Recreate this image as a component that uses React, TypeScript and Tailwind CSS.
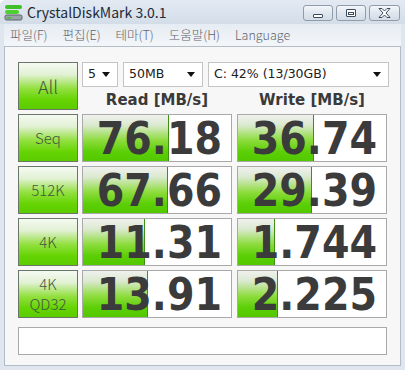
import React from 'react';

const rows = [
  { label: ['Seq'], read: '76.18', readW: 86, write: '36.74', writeW: 76 },
  { label: ['512K'], read: '67.66', readW: 85, write: '29.39', writeW: 74 },
  { label: ['4K'], read: '11.31', readW: 62, write: '1.744', writeW: 37 },
  { label: ['4K', 'QD32'], read: '13.91', readW: 65, write: '2.225', writeW: 40 },
];

const menus = ['파일(F)', '편집(E)', '테마(T)', '도움말(H)', 'Language'];

function GreenButton({ lines, big }: { lines: string[]; big?: boolean }) {
  return (
    <div className="w-[60px] h-[48px] border border-[#6b7766] bg-[linear-gradient(to_bottom,#f5faf2_0%,#e2f1d4_25%,#93e040_55%,#66d404_80%,#5ccc00_100%)] flex flex-col items-center justify-center text-[#40583a] font-light font-['Noto_Sans_CJK_KR',sans-serif]">
      {lines.map((l) => (
        <span key={l} className={big ? 'text-[18px] leading-[20px]' : 'text-[15px] leading-[20px]'}>
          {l}
        </span>
      ))}
    </div>
  );
}

function Cell({ value, fill }: { value: string; fill: number }) {
  return (
    <div className="relative w-[150px] h-[48px] border border-[#a9a9a9] bg-white flex items-center justify-end pr-[9px]">
      <div
        className="absolute left-0 top-0 bottom-0 border-r border-[#3f8f14] bg-[linear-gradient(to_bottom,#f0f1ee_0%,#dbe9d0_22%,#8ddc3c_55%,#5ccf06_80%,#52c800_100%)]"
        style={{ width: fill }}
      />
      <span className="relative text-[44px] leading-[46px] font-bold text-[#3b3b3b] font-['DejaVu_Sans_Condensed','DejaVu_Sans',sans-serif] pt-[2px]">
        {value}
      </span>
    </div>
  );
}

function Select({ text, width }: { text: string; width: number }) {
  return (
    <div
      className="h-[25px] border border-[#c4c4c4] bg-white flex items-center justify-between pl-[5px] pr-[7px] text-[12.5px] text-[#202020] font-['DejaVu_Sans',sans-serif]"
      style={{ width }}
    >
      <span>{text}</span>
      <svg width="8" height="5" viewBox="0 0 8 5">
        <path d="M0 0h8L4 5z" fill="#111" />
      </svg>
    </div>
  );
}

function CaptionButton({ children, wide }: { children: React.ReactNode; wide?: boolean }) {
  return (
    <div
      className={`${wide ? 'w-[31px]' : 'w-[30px]'} h-[16px] rounded-[3px] border border-[#8f9caa] bg-[linear-gradient(to_bottom,#f4f7fa,#dfe6ee_50%,#d3dce6)] flex items-center justify-center`}
    >
      {children}
    </div>
  );
}

export default function App() {
  return (
    <div className="w-[405px] h-[370px] bg-[#dfe6ee] flex flex-col overflow-hidden rounded-tl-[6px]">
      <div className="h-[24px] shrink-0 flex items-center pl-[4px] pr-[5px] bg-[linear-gradient(to_bottom,#e3eaf2,#d3dde8)]">
        <svg width="20" height="17" viewBox="0 0 20 17" className="mr-[3px]">
          <rect x="1" y="1" width="17" height="4" rx="2" fill="#3fbf2a" />
          <rect x="1" y="6" width="14" height="4" rx="2" fill="#4fcf30" />
          <rect x="1" y="11" width="17" height="5" rx="1.5" fill="#9aa3a8" stroke="#5b646a" strokeWidth="1" />
          <rect x="3" y="13" width="4" height="1.5" fill="#3fbf2a" />
        </svg>
        <span className="text-[14px] text-[#1e2a38] font-['Noto_Sans_CJK_KR',sans-serif] leading-none">
          CrystalDiskMark 3.0.1
        </span>
        <div className="ml-auto flex gap-[3px] pt-[2px]">
          <CaptionButton>
            <div className="w-[10px] h-[4px] rounded-[1px] border border-[#3c4a5a] bg-white mt-[5px]" />
          </CaptionButton>
          <CaptionButton>
            <div className="w-[10px] h-[8px] rounded-[1px] border border-[#3c4a5a] bg-white flex items-center justify-center">
              <div className="w-[6px] h-[3px] border border-[#3c4a5a]" />
            </div>
          </CaptionButton>
          <CaptionButton wide>
            <svg width="13" height="10" viewBox="0 0 13 10">
              <path
                d="M1 0.5h3l2.5 2.5 2.5-2.5h3l-4 4.5 4 4.5h-3l-2.5-2.5-2.5 2.5h-3l4-4.5z"
                fill="#fff"
                stroke="#3c4a5a"
                strokeWidth="1"
                strokeLinejoin="round"
              />
            </svg>
          </CaptionButton>
        </div>
      </div>
      <div className="flex-1 flex flex-col pl-[4px] pr-[4px] pb-[4px]">
        <div className="h-[22px] shrink-0 flex items-center gap-[15px] pl-[6px] bg-[linear-gradient(to_bottom,#e6ecf3,#f3f6f9)] text-[12.5px] font-light text-[#60656b] font-['Noto_Sans_CJK_KR',sans-serif]">
          {menus.map((m) => (
            <span key={m}>{m}</span>
          ))}
        </div>
        <div className="flex-1 border border-[#b3bdc8] bg-[#f7f7f7] pl-[13px] pt-[15px] flex flex-col">
          <div className="flex flex-col gap-[4px]">
            <div className="flex gap-[4px]">
              <GreenButton lines={['All']} big />
              <div className="flex flex-col">
                <div className="flex gap-[5px]">
                  <Select text="5" width={36} />
                  <Select text="50MB" width={80} />
                  <Select text="C: 42% (13/30GB)" width={181} />
                </div>
                <div className="flex gap-[5px] h-[23px] items-center pt-[3px] text-[15px] font-bold text-[#3a3a3a] font-['DejaVu_Sans',sans-serif]">
                  <span className="w-[150px] text-center">Read [MB/s]</span>
                  <span className="w-[150px] text-center">Write [MB/s]</span>
                </div>
              </div>
            </div>
            {rows.map((r) => (
              <div key={r.read} className="flex gap-[4px]">
                <GreenButton lines={r.label} />
                <div className="flex gap-[5px]">
                  <Cell value={r.read} fill={r.readW} />
                  <Cell value={r.write} fill={r.writeW} />
                </div>
              </div>
            ))}
          </div>
          <div className="mt-[9px] w-[369px] h-[28px] border border-[#a9a9a9] bg-white" />
        </div>
      </div>
    </div>
  );
}
